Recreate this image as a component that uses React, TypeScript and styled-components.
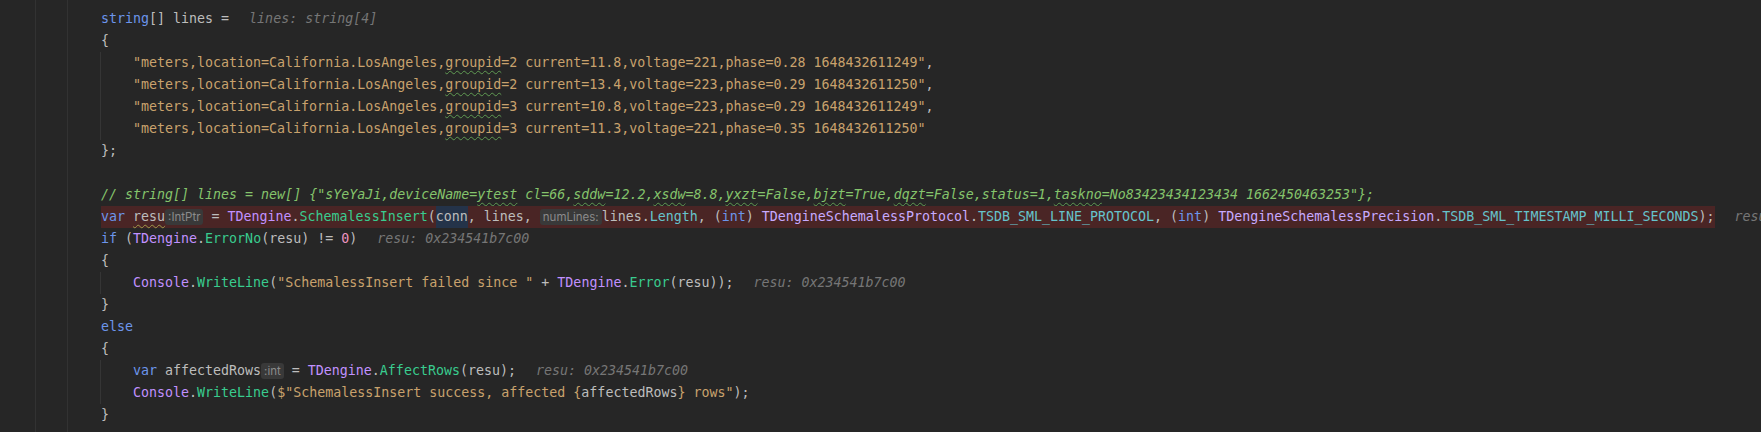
import React from "react";
import styled, { createGlobalStyle, css } from "styled-components";

const GlobalStyle = createGlobalStyle`
  html, body {
    margin: 0;
    padding: 0;
    background: #262626;
    overflow: hidden;
  }
  #root {
    width: 1761px;
    height: 432px;
    overflow: hidden;
  }
`;

type Kind = "p" | "kw" | "str" | "cmt" | "num" | "fn" | "cls" | "enm" | "mem";

const palette: Record<Kind, string> = {
  p: "#bdbdbd",
  kw: "#6c95eb",
  str: "#c9a26d",
  cmt: "#85c46c",
  num: "#ed94c0",
  fn: "#39cc8f",
  cls: "#c191ff",
  enm: "#c7aaff",
  mem: "#66c3cc",
};

const Editor = styled.div`
  width: 1761px;
  height: 432px;
  box-sizing: border-box;
  padding: 8px 0 0 101px;
  background-color: #262626;
  background-image: linear-gradient(#323232, #323232),
    linear-gradient(#323232, #323232);
  background-size: 1px 100%, 1px 100%;
  background-position: 35px 0, 67px 0;
  background-repeat: no-repeat;
  font-family: "DejaVu Sans Mono", "Liberation Mono", monospace;
  font-size: 13.3px;
  color: #bdbdbd;
  overflow: hidden;
`;

const Line = styled.div`
  height: 22px;
  line-height: 22px;
  white-space: pre;
`;

const Block = styled.div`
  margin-left: -1px;
  border-left: 1px solid #353535;
  padding-left: 32px;
`;

const Band = styled.span`
  display: inline-block;
  height: 22px;
  background: #4a2525;
`;

const Tok = styled.span<{ $k: Kind; $typo?: "green" | "olive"; $sel?: boolean }>`
  color: ${(p) => palette[p.$k]};
  font-style: ${(p) => (p.$k === "cmt" ? "italic" : "normal")};
  ${(p) =>
    p.$typo &&
    css`
      text-decoration: underline wavy ${p.$typo === "olive" ? "#a09a4a" : "#5f9a52"};
      text-decoration-thickness: 1px;
      text-underline-offset: 3px;
      text-decoration-skip-ink: none;
    `}
  ${(p) =>
    p.$sel &&
    css`
      display: inline-block;
      height: 22px;
      background: #243349;
    `}
`;

const Hint = styled.span`
  display: inline-block;
  vertical-align: top;
  margin-top: 3px;
  height: 16px;
  line-height: 16px;
  padding: 0 3px;
  border-radius: 3px;
  background: #393939;
  color: #8b8b8b;
  font-family: Inter, "Noto Sans", sans-serif;
  font-size: 11.5px;
  font-style: normal;
`;

const Value = styled.span`
  margin-left: 20px;
  color: #767676;
  font-style: italic;
`;

type T = [Kind, string, ("green" | "olive")?, boolean?];

const renderToks = (toks: T[]) =>
  toks.map(([k, text, typo, sel], i) => (
    <Tok key={i} $k={k} $typo={typo} $sel={sel}>
      {text}
    </Tok>
  ));

const meterLine = (g: string, rest: string, last: boolean): T[] => [
  ["str", '"meters,location=California.LosAngeles,'],
  ["str", "groupid", "green"],
  ["str", `=${g} ${rest}"`],
  ["p", last ? "" : ","],
];

const meters: T[][] = [
  meterLine("2", "current=11.8,voltage=221,phase=0.28 1648432611249", false),
  meterLine("2", "current=13.4,voltage=223,phase=0.29 1648432611250", false),
  meterLine("3", "current=10.8,voltage=223,phase=0.29 1648432611249", false),
  meterLine("3", "current=11.3,voltage=221,phase=0.35 1648432611250", true),
];

const comment: T[] = [
  ["cmt", '// string[] lines = new[] {"sYeYaJi,deviceName='],
  ["cmt", "ytest", "green"],
  ["cmt", " cl=66,"],
  ["cmt", "sddw", "green"],
  ["cmt", "=12.2,"],
  ["cmt", "xsdw", "green"],
  ["cmt", "=8.8,"],
  ["cmt", "yxzt", "green"],
  ["cmt", "=False,"],
  ["cmt", "bjzt", "green"],
  ["cmt", "=True,"],
  ["cmt", "dqzt", "green"],
  ["cmt", "=False,status=1,"],
  ["cmt", "taskno", "green"],
  ["cmt", '=No83423434123434 1662450463253"};'],
];

const resuValue = "resu: 0x234541b7c00";

export default function App() {
  return (
    <>
      <GlobalStyle />
      <Editor>
        <Line>
          {renderToks([
            ["kw", "string"],
            ["p", "[] lines ="],
          ])}
          <Value>lines: string[4]</Value>
        </Line>
        <Line>{"{"}</Line>
        <Block>
          {meters.map((toks, i) => (
            <Line key={i}>{renderToks(toks)}</Line>
          ))}
        </Block>
        <Line>{"};"}</Line>
        <Line> </Line>
        <Line>{renderToks(comment)}</Line>
        <Line>
          <Band>
            {renderToks([
              ["kw", "var"],
              ["p", " "],
              ["p", "resu", "olive"],
            ])}
            <Hint>:IntPtr</Hint>
            {renderToks([
              ["p", " = "],
              ["cls", "TDengine"],
              ["p", "."],
              ["fn", "SchemalessInsert"],
              ["p", "("],
              ["p", "conn", undefined, true],
              ["p", ", lines, "],
            ])}
            <Hint>numLines:</Hint>
            {renderToks([
              ["p", "lines."],
              ["mem", "Length"],
              ["p", ", ("],
              ["kw", "int"],
              ["p", ") "],
              ["enm", "TDengineSchemalessProtocol"],
              ["p", "."],
              ["mem", "TSDB_SML_LINE_PROTOCOL"],
              ["p", ", ("],
              ["kw", "int"],
              ["p", ") "],
              ["enm", "TDengineSchemalessPrecision"],
              ["p", "."],
              ["mem", "TSDB_SML_TIMESTAMP_MILLI_SECONDS"],
              ["p", ");"],
            ])}
          </Band>
          <Value>{resuValue}</Value>
        </Line>
        <Line>
          {renderToks([
            ["kw", "if"],
            ["p", " ("],
            ["cls", "TDengine"],
            ["p", "."],
            ["fn", "ErrorNo"],
            ["p", "(resu) != "],
            ["num", "0"],
            ["p", ")"],
          ])}
          <Value>{resuValue}</Value>
        </Line>
        <Line>{"{"}</Line>
        <Block>
          <Line>
            {renderToks([
              ["cls", "Console"],
              ["p", "."],
              ["fn", "WriteLine"],
              ["p", "("],
              ["str", '"SchemalessInsert failed since "'],
              ["p", " + "],
              ["cls", "TDengine"],
              ["p", "."],
              ["fn", "Error"],
              ["p", "(resu));"],
            ])}
            <Value>{resuValue}</Value>
          </Line>
        </Block>
        <Line>{"}"}</Line>
        <Line>{renderToks([["kw", "else"]])}</Line>
        <Line>{"{"}</Line>
        <Block>
          <Line>
            {renderToks([
              ["kw", "var"],
              ["p", " affectedRows"],
            ])}
            <Hint>:int</Hint>
            {renderToks([
              ["p", " = "],
              ["cls", "TDengine"],
              ["p", "."],
              ["fn", "AffectRows"],
              ["p", "(resu);"],
            ])}
            <Value>{resuValue}</Value>
          </Line>
          <Line>
            {renderToks([
              ["cls", "Console"],
              ["p", "."],
              ["fn", "WriteLine"],
              ["p", "("],
              ["str", '$"SchemalessInsert success, affected {'],
              ["p", "affectedRows"],
              ["str", '} rows"'],
              ["p", ");"],
            ])}
          </Line>
        </Block>
        <Line>{"}"}</Line>
      </Editor>
    </>
  );
}
